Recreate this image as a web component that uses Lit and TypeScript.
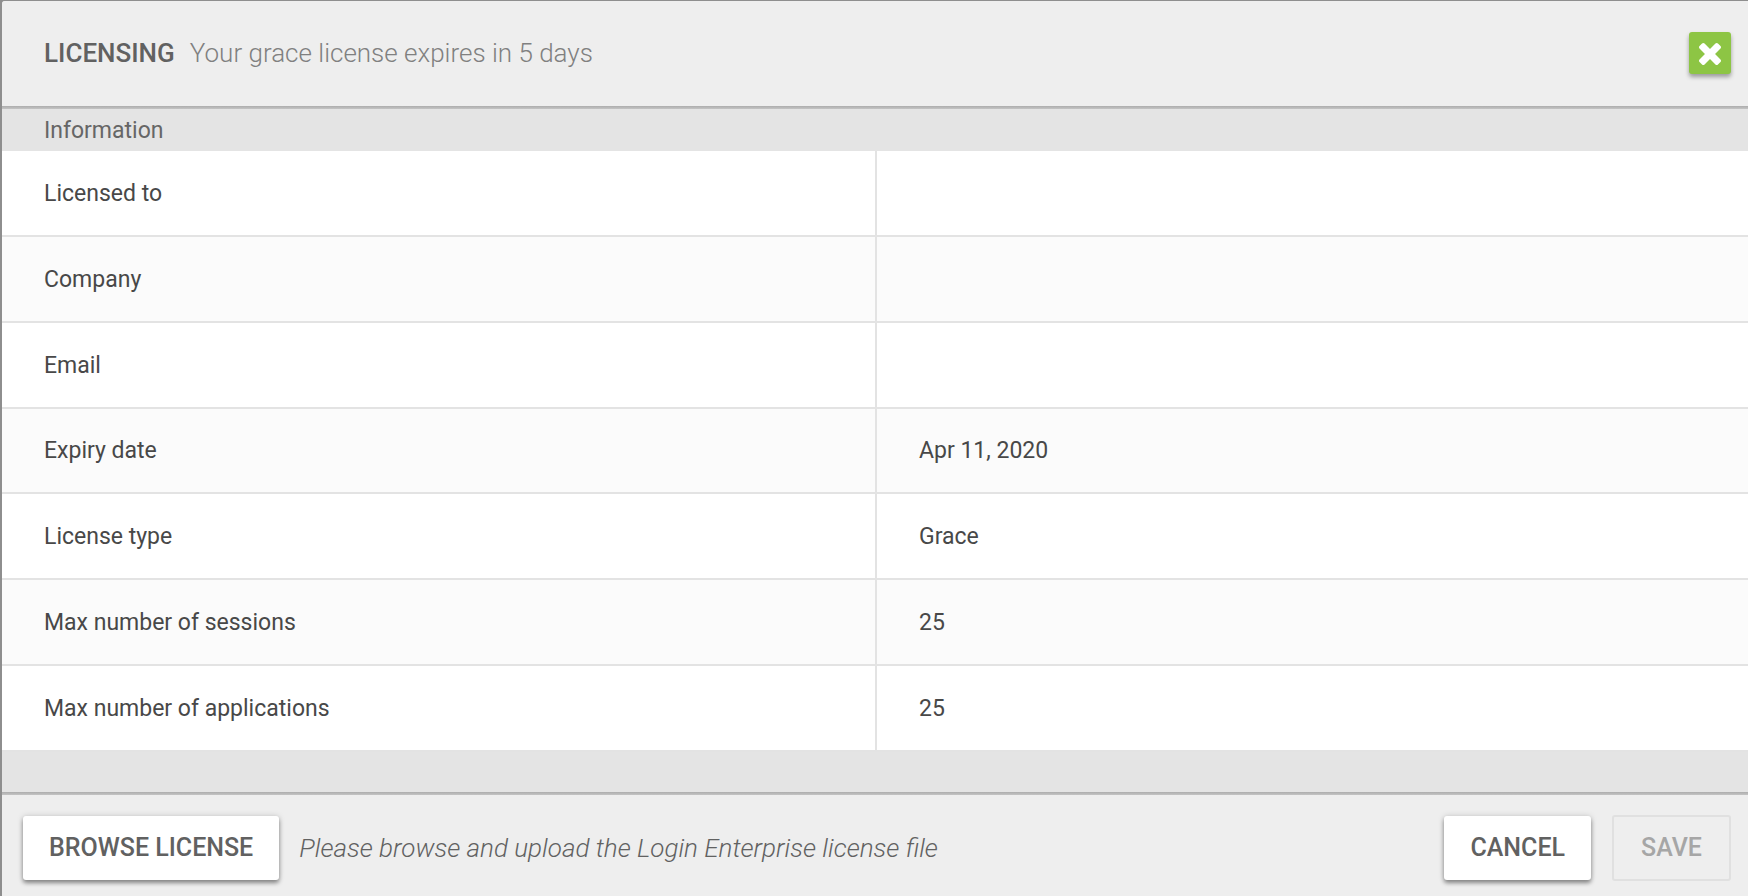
import { LitElement, html, css } from "lit";
import { customElement, property } from "lit/decorators.js";

interface LicenseField {
  label: string;
  value: string;
}

@customElement("license-table")
export class LicenseTable extends LitElement {
  @property({ attribute: false }) fields: LicenseField[] = [];

  static styles = css`
    :host {
      display: grid;
    }
    .table,
    .body {
      display: grid;
      grid-auto-rows: 1fr;
    }
    .row {
      display: grid;
      grid-template-columns: 1fr 1fr;
      min-height: 64px;
      box-sizing: border-box;
      border-bottom: 2px solid #e3e3e3;
      background: #fff;
    }
    .row:nth-child(even) {
      background: #fbfbfb;
    }
    .label,
    .value {
      display: flex;
      align-items: center;
      padding: 2px 42px 0;
      font-size: 23px;
      line-height: 28px;
      font-weight: 400;
      text-align: left;
      color: #484848;
    }
    .value {
      border-left: 2px solid #e3e3e3;
    }
  `;

  render() {
    return html`
      <table class="table">
        <tbody class="body">
          ${this.fields.map(
            (f) => html`<tr class="row">
              <th class="label" scope="row">${f.label}</th>
              <td class="value">${f.value}</td>
            </tr>`
          )}
        </tbody>
      </table>
    `;
  }
}

@customElement("app-root")
export class AppRoot extends LitElement {
  private fields: LicenseField[] = [
    { label: "Licensed to", value: "" },
    { label: "Company", value: "" },
    { label: "Email", value: "" },
    { label: "Expiry date", value: "Apr 11, 2020" },
    { label: "License type", value: "Grace" },
    { label: "Max number of sessions", value: "25" },
    { label: "Max number of applications", value: "25" },
  ];

  static styles = css`
    :host {
      display: grid;
      box-sizing: border-box;
      min-height: 100vh;
      padding: 1px 0 0 2px;
      background: #8e8e8e;
      font-family: Roboto, "Liberation Sans", sans-serif;
    }
    .dialog {
      display: grid;
      grid-template-rows: auto auto 1fr auto;
      border-top-left-radius: 3px;
      overflow: hidden;
      background: #e4e4e4;
    }
    .header {
      display: flex;
      align-items: center;
      gap: 15px;
      height: 105px;
      box-sizing: border-box;
      padding: 0 17px 1px 42px;
      background: #eee;
    }
    .title {
      margin: 0;
      font-size: 26px;
      line-height: 32px;
      font-weight: 500;
      color: #616161;
    }
    .status {
      flex: 1;
      margin: 0;
      font-size: 26px;
      line-height: 32px;
      font-weight: 300;
      color: #808080;
    }
    .close {
      display: grid;
      place-items: center;
      width: 42px;
      height: 42px;
      padding: 2px 0 0;
      border: 0;
      border-radius: 3px;
      background: #8dc544;
      box-shadow: 0 3px 4px rgba(0, 0, 0, 0.35);
      cursor: pointer;
    }
    .cross {
      width: 22px;
      height: 22px;
      fill: #fff;
    }
    .section {
      margin: 0;
      padding: 11px 42px 6px;
      background: linear-gradient(#adadad, #c4c4c4) top / 100% 3px no-repeat #e4e4e4;
      font-size: 23px;
      line-height: 28px;
      font-weight: 400;
      color: #666;
    }
    .footer {
      display: flex;
      align-items: center;
      margin-top: 40px;
      padding: 23px 17px 15px 21px;
      background: linear-gradient(#adadad, #c4c4c4) top / 100% 3px no-repeat #eee;
    }
    .button {
      height: 64px;
      padding: 0 26px;
      border: 0;
      border-radius: 3px;
      background: #fff;
      box-shadow: 0 3px 4px rgba(0, 0, 0, 0.4), 0 0 6px rgba(0, 0, 0, 0.15);
      font-family: inherit;
      font-size: 25px;
      line-height: 30px;
      font-weight: 500;
      color: #616161;
      cursor: pointer;
    }
    .save {
      height: 66px;
      margin-left: 21px;
      padding: 0 27px;
      border: 2px solid #e0e0e0;
      background: transparent;
      box-shadow: none;
      color: #a6a6a6;
      cursor: default;
    }
    .hint {
      flex: 1;
      margin: 0 20px;
      font-size: 26px;
      line-height: 32px;
      font-weight: 300;
      font-style: italic;
      color: #616161;
    }
  `;

  render() {
    return html`
      <main class="dialog">
        <header class="header">
          <h1 class="title">LICENSING</h1>
          <p class="status">Your grace license expires in 5 days</p>
          <button class="close" type="button" aria-label="Close">
            <svg class="cross" viewBox="110 366 1188 1188" aria-hidden="true">
              <path
                d="M1298 1254q0 40-28 68l-136 136q-28 28-68 28t-68-28l-294-294-294 294q-28 28-68 28t-68-28l-136-136q-28-28-28-68t28-68l294-294-294-294q-28-28-28-68t28-68l136-136q28-28 68-28t68 28l294 294 294-294q28-28 68-28t68 28l136 136q28 28 28 68t-28 68l-294 294 294 294q28 28 28 68z"
                transform="translate(0 68)"
              />
            </svg>
          </button>
        </header>
        <h2 class="section">Information</h2>
        <license-table .fields=${this.fields}></license-table>
        <footer class="footer">
          <button class="button" type="button">BROWSE LICENSE</button>
          <p class="hint">Please browse and upload the Login Enterprise license file</p>
          <button class="button" type="button">CANCEL</button>
          <button class="button save" type="button" disabled>SAVE</button>
        </footer>
      </main>
    `;
  }
}
